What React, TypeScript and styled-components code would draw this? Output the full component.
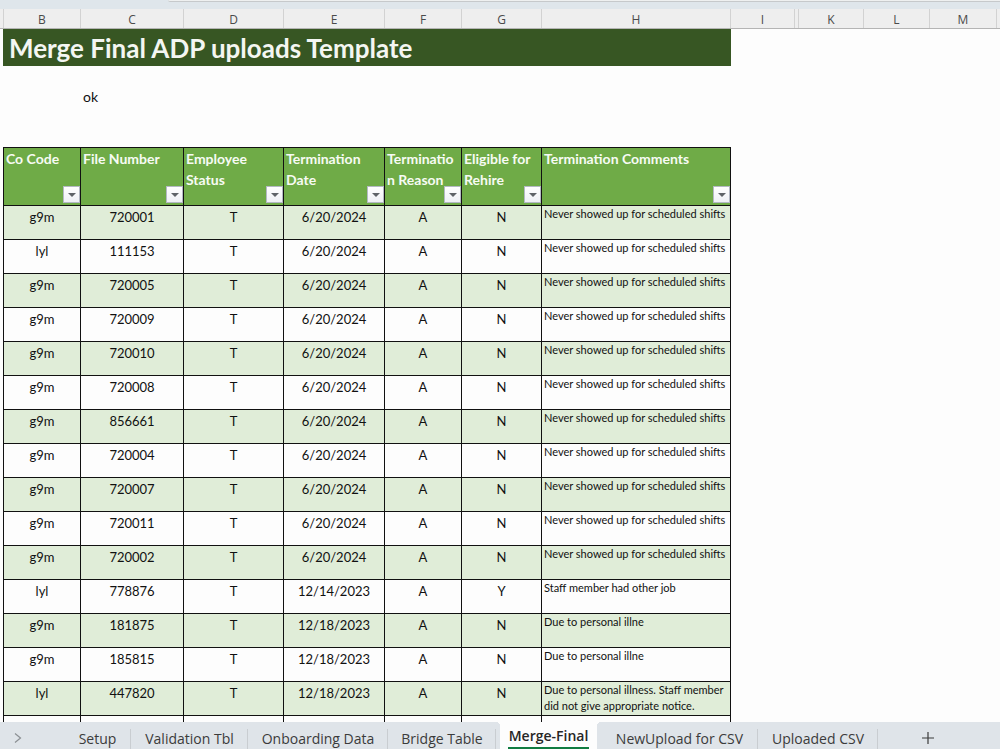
import React from "react";
import styled, { createGlobalStyle, css } from "styled-components";

const GlobalStyle = createGlobalStyle`
  * { box-sizing: border-box; }
  body { margin: 0; background: #fdfdfd; }
`;

const sheetFont = `Lato, "Liberation Sans", sans-serif`;
const chromeFont = `"Open Sans", "Noto Sans", sans-serif`;

const Workbook = styled.div`
  display: flex;
  flex-direction: column;
  height: 100vh;
  overflow: hidden;
  color: #111;
  font-family: ${sheetFont};
`;

const FormulaStrip = styled.div`
  flex: none;
  height: 9px;
  padding-left: 168px;
  background: #dfe6eb;
`;

const FormulaEdge = styled.div`
  height: 2px;
  border-bottom: 1px solid #c6c9cb;
  border-bottom-left-radius: 4px;
  background: #eef0f0;
`;

const ColumnHeads = styled.div`
  flex: none;
  display: grid;
  grid-template-columns: 4px 77px 103px 100px 101px 77px 80px 189px 64px 4px 65px 66px 67px 1fr;
  grid-template-rows: 19px;
  height: 20px;
  border-bottom: 1px solid #b4b4b4;
  background: #eeeeee;
`;

const ColumnHead = styled.div`
  border-right: 1px solid #d2d2d2;
  color: #4a4a4a;
  font: 12px/22px ${chromeFont};
  text-align: center;

  &:last-child { border-right: 0; }
`;

const Sheet = styled.main`
  flex: 1;
  min-height: 0;
  overflow: hidden;
  padding-left: 3px;
`;

const Title = styled.h1`
  width: 728px;
  height: 37px;
  margin: 0;
  padding-left: 6px;
  background: #375623;
  color: #f4f6f2;
  font-size: 26px;
  line-height: 38px;
  white-space: nowrap;
`;

const StatusCell = styled.p`
  height: 81px;
  margin: 0;
  padding: 21px 0 0 80px;
  font-size: 14px;
  line-height: 20px;
`;

const DataTable = styled.table`
  width: 728px;
  border-top: 1px solid #111;
  border-left: 1px solid #111;
  border-spacing: 0;
  table-layout: fixed;
`;

const HeadCell = styled.th<{ $breakAll?: boolean }>`
  position: relative;
  height: 58px;
  padding: 0 2px;
  border-right: 1px solid #111;
  border-bottom: 1px solid #111;
  background: #6fab47;
  color: #f7fbf4;
  font-size: 14px;
  line-height: 21px;
  text-align: left;
  vertical-align: top;
  ${(p) => p.$breakAll && css`word-break: break-all;`}
`;

const FilterButton = styled.button`
  position: absolute;
  right: 0;
  bottom: 2px;
  display: flex;
  align-items: center;
  justify-content: center;
  width: 17px;
  height: 17px;
  padding: 0;
  border: 1px solid #b4b9c4;
  background: linear-gradient(#ffffff, #eef0f5);
`;

const Row = styled.tr`
  background: #fdfdfd;
  &:nth-child(odd) { background: #e0edd8; }
`;

const Cell = styled.td<{ $comment?: boolean }>`
  height: 34px;
  padding: 1px 2px;
  border-right: 1px solid #111;
  border-bottom: 1px solid #111;
  font-size: 13px;
  line-height: 20px;
  text-align: center;
  vertical-align: top;
  ${(p) =>
    p.$comment &&
    css`
      padding: 0 0 0 2px;
      font-size: 11px;
      line-height: 16px;
      text-align: left;
    `}
`;

const TabBar = styled.nav`
  flex: none;
  display: flex;
  height: 27px;
  background: #dfe4e9;
  font-family: ${chromeFont};
`;

const ScrollButton = styled.button`
  width: 64px;
  padding: 4px 0 0 14px;
  border: 0;
  background: none;
  text-align: left;
  line-height: 0;
`;

const Tab = styled.button<{ $width: number }>`
  position: relative;
  width: ${(p) => p.$width}px;
  padding: 5px 0 0;
  border: 0;
  background: none;
  color: #3b3b3b;
  font: 14px/24px ${chromeFont};
  white-space: nowrap;

  &::after {
    content: "";
    position: absolute;
    top: 7px;
    right: 0;
    bottom: 0;
    border-right: 1px solid #c9cdd1;
  }
`;

const ActiveTab = styled.button`
  position: relative;
  width: 97px;
  margin: 0 4px;
  padding: 0 8px;
  border: 0;
  background: #fdfdfd;
  color: #262626;
  font: 600 14px/26px ${chromeFont};
  white-space: nowrap;

  &::before,
  &::after {
    content: "";
    position: absolute;
    top: 0;
    width: 4px;
    height: 4px;
  }
  &::before {
    left: -4px;
    background: radial-gradient(circle at 0 100%, #dfe4e9 4px, #fdfdfd 4px);
  }
  &::after {
    right: -4px;
    background: radial-gradient(circle at 100% 100%, #dfe4e9 4px, #fdfdfd 4px);
  }

  span {
    display: block;
    height: 26px;
    border-bottom: 2px solid #107c41;
  }
`;

const AddButton = styled.button`
  width: 99px;
  padding: 4px 0 0;
  border: 0;
  background: none;
  line-height: 0;
`;

const letters = ["", "B", "C", "D", "E", "F", "G", "H", "I", "", "K", "L", "M", ""];

const columns = [
  { label: "Co Code", width: 77 },
  { label: "File Number", width: 103 },
  { label: "Employee Status", width: 100 },
  { label: "Termination Date", width: 101 },
  { label: "Termination Reason", width: 77, breakAll: true },
  { label: "Eligible for Rehire", width: 80 },
  { label: "Termination Comments", width: 189 },
];

const noShow = "Never showed up for scheduled shifts";

const rows = [
  ["g9m", "720001", "T", "6/20/2024", "A", "N", noShow],
  ["lyl", "111153", "T", "6/20/2024", "A", "N", noShow],
  ["g9m", "720005", "T", "6/20/2024", "A", "N", noShow],
  ["g9m", "720009", "T", "6/20/2024", "A", "N", noShow],
  ["g9m", "720010", "T", "6/20/2024", "A", "N", noShow],
  ["g9m", "720008", "T", "6/20/2024", "A", "N", noShow],
  ["g9m", "856661", "T", "6/20/2024", "A", "N", noShow],
  ["g9m", "720004", "T", "6/20/2024", "A", "N", noShow],
  ["g9m", "720007", "T", "6/20/2024", "A", "N", noShow],
  ["g9m", "720011", "T", "6/20/2024", "A", "N", noShow],
  ["g9m", "720002", "T", "6/20/2024", "A", "N", noShow],
  ["lyl", "778876", "T", "12/14/2023", "A", "Y", "Staff member had other job"],
  ["g9m", "181875", "T", "12/18/2023", "A", "N", "Due to personal illne"],
  ["g9m", "185815", "T", "12/18/2023", "A", "N", "Due to personal illne"],
  ["lyl", "447820", "T", "12/18/2023", "A", "N", "Due to personal illness. Staff member did not give appropriate notice."],
  ["", "", "", "", "", "", ""],
];

export default function App() {
  return (
    <Workbook>
      <GlobalStyle />
      <FormulaStrip>
        <FormulaEdge />
      </FormulaStrip>
      <ColumnHeads>
        {letters.map((letter, i) => (
          <ColumnHead key={i}>{letter}</ColumnHead>
        ))}
      </ColumnHeads>
      <Sheet>
        <Title>Merge Final ADP uploads Template</Title>
        <StatusCell>ok</StatusCell>
        <DataTable>
          <colgroup>
            {columns.map((c) => (
              <col key={c.label} width={c.width} />
            ))}
          </colgroup>
          <thead>
            <tr>
              {columns.map((c) => (
                <HeadCell key={c.label} scope="col" $breakAll={c.breakAll}>
                  {c.label}
                  <FilterButton aria-label={`Filter ${c.label}`}>
                    <svg width="8" height="4" viewBox="0 0 8 4">
                      <path d="M0 0h8L4 4z" fill="#5f6368" />
                    </svg>
                  </FilterButton>
                </HeadCell>
              ))}
            </tr>
          </thead>
          <tbody>
            {rows.map((row, r) => (
              <Row key={r}>
                {row.map((value, c) => (
                  <Cell key={c} $comment={c === 6}>
                    {value}
                  </Cell>
                ))}
              </Row>
            ))}
          </tbody>
        </DataTable>
      </Sheet>
      <TabBar aria-label="Sheets">
        <ScrollButton aria-label="Next sheets">
          <svg width="8" height="12" viewBox="0 0 8 12" fill="none" stroke="#8b8f93" strokeWidth="1.2">
            <path d="M1 1.5 6.5 6 1 10.5" />
          </svg>
        </ScrollButton>
        <Tab $width={67}>Setup</Tab>
        <Tab $width={117}>Validation Tbl</Tab>
        <Tab $width={140}>Onboarding Data</Tab>
        <Tab $width={108}>Bridge Table</Tab>
        <ActiveTab aria-current="page">
          <span>Merge-Final</span>
        </ActiveTab>
        <Tab $width={157}>NewUpload for CSV</Tab>
        <Tab $width={120}>Uploaded CSV</Tab>
        <AddButton aria-label="New sheet">
          <svg width="12" height="12" viewBox="0 0 12 12" stroke="#3b3b3b" strokeWidth="1.2">
            <path d="M6 0v12M0 6h12" />
          </svg>
        </AddButton>
      </TabBar>
    </Workbook>
  );
}
